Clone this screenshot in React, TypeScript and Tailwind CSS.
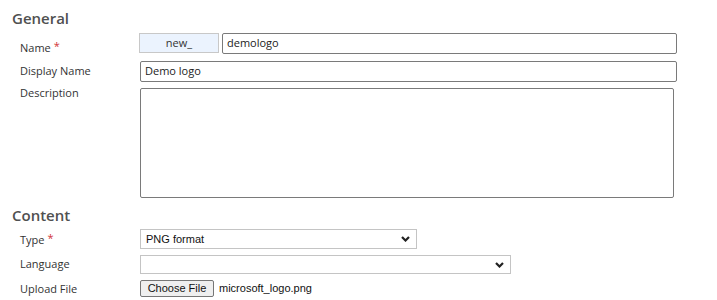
import React from "react";

const labelFont = { fontFamily: '"Segoe UI", "Open Sans", "Noto Sans", sans-serif' };

function Chevron() {
  return (
    <svg width="9" height="6" viewBox="0 0 9 6" className="shrink-0">
      <path d="M1 1 L4.5 4.5 L8 1" fill="none" stroke="#222" strokeWidth="2.2" />
    </svg>
  );
}

function Req() {
  return <span className="ml-[3px] text-[#d13438] relative top-[-2px]">*</span>;
}

export default function App() {
  return (
    <div className="w-[717px] h-[300px] bg-white overflow-hidden text-[#333]" style={labelFont}>
      <div className="pt-[8px] pl-[12px] h-[28px] text-[15px] leading-[20px] font-semibold text-[#505050]">General</div>

      <div className="mt-[5px] flex items-start pl-[20px] h-[21px]">
        <div className="w-[119px] h-[21px] text-[11px] leading-[14px] pt-[8px]">
          Name<Req />
        </div>
        <div className="w-[80px] h-[20px] bg-[#ebf3fe] border border-[#c8c8c8] flex items-center justify-center text-[11px]">new_</div>
        <div className="ml-[3px] w-[455px] h-[21px] border border-[#7a7a7a] rounded-[2px] flex items-center pl-[4px] text-[11px] text-[#222]">demologo</div>
      </div>

      <div className="mt-[7px] flex items-center pl-[20px] h-[21px]">
        <div className="w-[120px] text-[11px]">Display Name</div>
        <div className="w-[537px] h-[21px] border border-[#7a7a7a] rounded-[2px] flex items-center pl-[4px] text-[11px] text-[#222]">Demo logo</div>
      </div>

      <div className="mt-[6px] flex items-start pl-[20px] h-[110px]">
        <div className="w-[120px] text-[11px] leading-[12px] relative top-[-1px]">Description</div>
        <div className="w-[534px] h-[110px] border border-[#7a7a7a] rounded-[2px]"></div>
      </div>

      <div className="mt-[7px] pl-[12px] h-[24px] text-[15px] leading-[20px] font-semibold text-[#505050]">Content</div>

      <div className="flex items-center pl-[20px] h-[20px]">
        <div className="w-[120px] text-[11px] pt-[3px]">
          Type<Req />
        </div>
        <div
          className="w-[277px] h-[20px] border border-[#c4c4c4] flex items-center justify-between pl-[5px] pr-[6px] text-[11px] text-[#111]"
          style={{ fontFamily: '"Liberation Sans", Arial, sans-serif' }}
        >
          <span>PNG format</span>
          <Chevron />
        </div>
      </div>

      <div className="mt-[6px] flex items-center pl-[20px] h-[19px]">
        <div className="w-[120px] text-[11px]">Language</div>
        <div className="w-[371px] h-[19px] border border-[#c4c4c4] flex items-center justify-end pr-[6px]">
          <Chevron />
        </div>
      </div>

      <div className="mt-[6px] flex items-center pl-[20px] h-[17px]">
        <div className="w-[120px] text-[11px] pt-[2px]">Upload File</div>
        <div className="flex items-center" style={{ fontFamily: '"Liberation Sans", Arial, sans-serif' }}>
          <div className="w-[74px] h-[17px] bg-[#efefef] border border-[#767676] rounded-[2px] flex items-center justify-center text-[11px] text-[#111]">Choose File</div>
          <span className="ml-[5px] text-[11px] text-[#111]">microsoft_logo.png</span>
        </div>
      </div>
    </div>
  );
}
